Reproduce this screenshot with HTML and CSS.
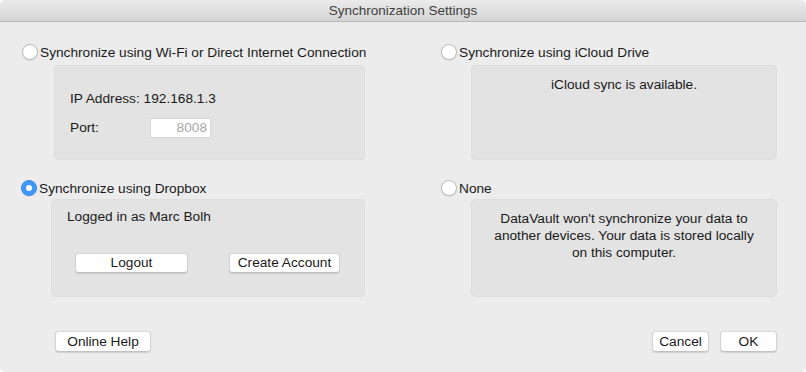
FILE: index.html
```html
<!DOCTYPE html>
<html>
<head>
<meta charset="utf-8">
<link rel="stylesheet" href="styles.css">
</head>
<body>
<div class="window">
  <div class="titlebar">Synchronization Settings</div>
  <div class="content">
    <div class="grid">
      <section class="option">
        <label class="radio-row"><span class="radio"></span><span class="label">Synchronize using Wi-Fi or Direct Internet Connection</span></label>
        <div class="box box-wifi">
          <div class="field-row">IP Address: 192.168.1.3</div>
          <div class="field-row port-row"><span class="field-label">Port:</span><span class="input">8008</span></div>
        </div>
      </section>
      <section class="option option-right">
        <label class="radio-row"><span class="radio"></span><span class="label">Synchronize using iCloud Drive</span></label>
        <div class="box box-icloud">
          <p class="center-text">iCloud sync is available.</p>
        </div>
      </section>
      <section class="option">
        <label class="radio-row"><span class="radio checked"></span><span class="label">Synchronize using Dropbox</span></label>
        <div class="box box-dropbox">
          <div class="logged">Logged in as Marc Bolh</div>
          <div class="btn-row">
            <button class="btn btn-logout">Logout</button>
            <button class="btn btn-create">Create Account</button>
          </div>
        </div>
      </section>
      <section class="option option-right">
        <label class="radio-row"><span class="radio"></span><span class="label">None</span></label>
        <div class="box box-none">
          <p class="center-text multi">DataVault won't synchronize your data to<br>another devices. Your data is stored locally<br>on this computer.</p>
        </div>
      </section>
    </div>
    <div class="footer">
      <button class="btn btn-help">Online Help</button>
      <div class="footer-right">
        <button class="btn btn-cancel">Cancel</button>
        <button class="btn btn-ok">OK</button>
      </div>
    </div>
  </div>
</div>
</body>
</html>
```

FILE: styles.css
```css
* { box-sizing: border-box; }
html, body { margin: 0; padding: 0; background: #ffffff; }
body {
  font-family: "Liberation Sans", Arial, sans-serif;
  font-size: 13.7px;
  color: #1a1a1a;
}
.window {
  width: 806px;
  height: 372px;
  background: #ececec;
  border-radius: 5px;
  overflow: hidden;
}
.titlebar {
  height: 22px;
  background: linear-gradient(#ebebeb, #d4d4d4);
  border-bottom: 1px solid #b8b8b8;
  text-align: center;
  line-height: 22px;
  font-size: 13.5px;
  color: #3e3e3e;
}
.content {
  padding: 22px 29px 0 21px;
}
.grid {
  display: grid;
  grid-template-columns: 344px 337px;
  column-gap: 75px;
  row-gap: 20px;
}
.radio-row {
  display: flex;
  align-items: center;
  height: 16px;
}
.radio {
  width: 16px;
  height: 16px;
  border-radius: 50%;
  background: #ffffff;
  border: 1px solid #bdbdbd;
  box-shadow: 0 0.5px 1px rgba(0,0,0,0.15);
  margin-left: 1px;
  margin-right: 2px;
  flex: none;
  position: relative;
}
.radio.checked {
  background: #3d98f8;
  border-color: #3a8fe8;
  margin-left: 0;
}
.radio.checked::after {
  content: "";
  position: absolute;
  left: 4px;
  top: 4px;
  width: 6px;
  height: 6px;
  border-radius: 50%;
  background: #ffffff;
}
.label { white-space: nowrap; }
.box {
  background: #e3e3e3;
  border-radius: 4px;
  border: 1px solid #dedede;
}
.box-wifi {
  margin-top: 5px;
  margin-left: 33px;
  height: 95px;
  padding: 25px 0 0 15px;
}
.field-row { height: 16px; line-height: 16px; }
.port-row {
  display: flex;
  align-items: center;
  height: 20px;
  margin-top: 11px;
}
.field-label { width: 80px; }
.input {
  width: 61px;
  height: 20px;
  background: #ffffff;
  border: 1px solid #d6d6d6;
  color: #a9a9a9;
  text-align: right;
  padding-right: 3px;
  line-height: 18px;
}
.box-icloud {
  margin-top: 5px;
  margin-left: 31px;
  height: 95px;
}
.center-text {
  margin: 0;
  text-align: center;
  padding-top: 10px;
  line-height: 17px;
}
.box-dropbox {
  margin-top: 3px;
  margin-left: 30px;
  height: 98px;
  padding: 9px 0 0 15px;
}
.logged { line-height: 16px; }
.btn-row {
  display: flex;
  gap: 41px;
  margin-top: 28px;
  padding-left: 8px;
}
.btn {
  font-family: "Liberation Sans", Arial, sans-serif;
  font-size: 13.7px;
  color: #1a1a1a;
  background: #ffffff;
  border: 1px solid #d2d2d2;
  border-top-color: #dadada;
  border-bottom-color: #c2c2c2;
  border-radius: 4px;
  box-shadow: 0 0.5px 1px rgba(0,0,0,0.12);
  height: 20px;
  padding: 0;
  line-height: 18px;
}
.btn-logout { width: 113px; }
.btn-create { width: 111px; }
.box-none {
  margin-top: 3px;
  margin-left: 31px;
  height: 98px;
}
.footer {
  display: flex;
  justify-content: space-between;
  margin-top: 34px;
  padding-left: 34px;
}
.footer-right { display: flex; gap: 11px; }
.btn-help { width: 96px; height: 21px; }
.btn-cancel, .btn-ok { width: 57px; height: 21px; }
```
